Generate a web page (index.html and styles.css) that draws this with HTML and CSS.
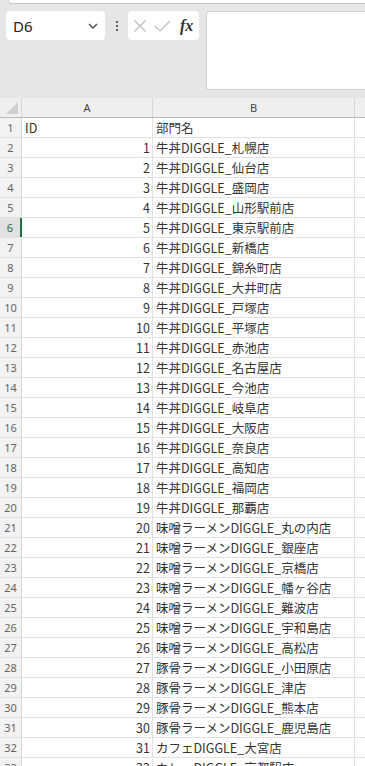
FILE: index.html
```html
<!DOCTYPE html>
<html lang="ja">
<head>
<meta charset="utf-8">
<title>Sheet</title>
<link rel="stylesheet" href="styles.css">
</head>
<body>
<div class="toolbar">
  <div class="topbox"></div>
  <div class="fbar">
    <div class="namebox">
      <span class="nb-text">D6</span>
      <svg class="chev" width="10" height="6" viewBox="0 0 10 6"><path d="M1 1 L5 5 L9 1" fill="none" stroke="#444" stroke-width="1.3"/></svg>
    </div>
    <div class="dots"><i></i><i></i><i></i></div>
    <div class="fbtns">
      <svg width="14" height="14" viewBox="0 0 14 14"><path d="M1.5 1.5 L12.5 12.5 M12.5 1.5 L1.5 12.5" stroke="#bdbdbd" stroke-width="1.2" fill="none"/></svg>
      <svg width="17" height="14" viewBox="0 0 17 14"><path d="M1 7 L6 12 L16 2" stroke="#bdbdbd" stroke-width="1.2" fill="none"/></svg>
      <span class="fx">fx</span>
    </div>
    <div class="finput"></div>
  </div>
</div>
<div class="sheet">
  <div class="row hdr">
    <div class="rh corner"><span class="tri"></span></div>
    <div class="ch">A</div>
    <div class="ch">B</div>
    <div class="ch rest"></div>
  </div>
  <div class="row"><div class="rh">1</div><div class="c">ID</div><div class="c">部門名</div><div class="c rest"></div></div>
  <div class="row"><div class="rh">2</div><div class="c n">1</div><div class="c">牛丼DIGGLE_札幌店</div><div class="c rest"></div></div>
  <div class="row"><div class="rh">3</div><div class="c n">2</div><div class="c">牛丼DIGGLE_仙台店</div><div class="c rest"></div></div>
  <div class="row"><div class="rh">4</div><div class="c n">3</div><div class="c">牛丼DIGGLE_盛岡店</div><div class="c rest"></div></div>
  <div class="row"><div class="rh">5</div><div class="c n">4</div><div class="c">牛丼DIGGLE_山形駅前店</div><div class="c rest"></div></div>
  <div class="row"><div class="rh sel">6</div><div class="c n">5</div><div class="c">牛丼DIGGLE_東京駅前店</div><div class="c rest"></div></div>
  <div class="row"><div class="rh">7</div><div class="c n">6</div><div class="c">牛丼DIGGLE_新橋店</div><div class="c rest"></div></div>
  <div class="row"><div class="rh">8</div><div class="c n">7</div><div class="c">牛丼DIGGLE_錦糸町店</div><div class="c rest"></div></div>
  <div class="row"><div class="rh">9</div><div class="c n">8</div><div class="c">牛丼DIGGLE_大井町店</div><div class="c rest"></div></div>
  <div class="row"><div class="rh">10</div><div class="c n">9</div><div class="c">牛丼DIGGLE_戸塚店</div><div class="c rest"></div></div>
  <div class="row"><div class="rh">11</div><div class="c n">10</div><div class="c">牛丼DIGGLE_平塚店</div><div class="c rest"></div></div>
  <div class="row"><div class="rh">12</div><div class="c n">11</div><div class="c">牛丼DIGGLE_赤池店</div><div class="c rest"></div></div>
  <div class="row"><div class="rh">13</div><div class="c n">12</div><div class="c">牛丼DIGGLE_名古屋店</div><div class="c rest"></div></div>
  <div class="row"><div class="rh">14</div><div class="c n">13</div><div class="c">牛丼DIGGLE_今池店</div><div class="c rest"></div></div>
  <div class="row"><div class="rh">15</div><div class="c n">14</div><div class="c">牛丼DIGGLE_岐阜店</div><div class="c rest"></div></div>
  <div class="row"><div class="rh">16</div><div class="c n">15</div><div class="c">牛丼DIGGLE_大阪店</div><div class="c rest"></div></div>
  <div class="row"><div class="rh">17</div><div class="c n">16</div><div class="c">牛丼DIGGLE_奈良店</div><div class="c rest"></div></div>
  <div class="row"><div class="rh">18</div><div class="c n">17</div><div class="c">牛丼DIGGLE_高知店</div><div class="c rest"></div></div>
  <div class="row"><div class="rh">19</div><div class="c n">18</div><div class="c">牛丼DIGGLE_福岡店</div><div class="c rest"></div></div>
  <div class="row"><div class="rh">20</div><div class="c n">19</div><div class="c">牛丼DIGGLE_那覇店</div><div class="c rest"></div></div>
  <div class="row"><div class="rh">21</div><div class="c n">20</div><div class="c">味噌ラーメンDIGGLE_丸の内店</div><div class="c rest"></div></div>
  <div class="row"><div class="rh">22</div><div class="c n">21</div><div class="c">味噌ラーメンDIGGLE_銀座店</div><div class="c rest"></div></div>
  <div class="row"><div class="rh">23</div><div class="c n">22</div><div class="c">味噌ラーメンDIGGLE_京橋店</div><div class="c rest"></div></div>
  <div class="row"><div class="rh">24</div><div class="c n">23</div><div class="c">味噌ラーメンDIGGLE_幡ヶ谷店</div><div class="c rest"></div></div>
  <div class="row"><div class="rh">25</div><div class="c n">24</div><div class="c">味噌ラーメンDIGGLE_難波店</div><div class="c rest"></div></div>
  <div class="row"><div class="rh">26</div><div class="c n">25</div><div class="c">味噌ラーメンDIGGLE_宇和島店</div><div class="c rest"></div></div>
  <div class="row"><div class="rh">27</div><div class="c n">26</div><div class="c">味噌ラーメンDIGGLE_高松店</div><div class="c rest"></div></div>
  <div class="row"><div class="rh">28</div><div class="c n">27</div><div class="c">豚骨ラーメンDIGGLE_小田原店</div><div class="c rest"></div></div>
  <div class="row"><div class="rh">29</div><div class="c n">28</div><div class="c">豚骨ラーメンDIGGLE_津店</div><div class="c rest"></div></div>
  <div class="row"><div class="rh">30</div><div class="c n">29</div><div class="c">豚骨ラーメンDIGGLE_熊本店</div><div class="c rest"></div></div>
  <div class="row"><div class="rh">31</div><div class="c n">30</div><div class="c">豚骨ラーメンDIGGLE_鹿児島店</div><div class="c rest"></div></div>
  <div class="row"><div class="rh">32</div><div class="c n">31</div><div class="c">カフェDIGGLE_大宮店</div><div class="c rest"></div></div>
  <div class="row"><div class="rh">33</div><div class="c n">32</div><div class="c">カレーDIGGLE_京都駅店</div><div class="c rest"></div></div>
</div>
</body>
</html>
```
FILE: styles.css
```css
* { box-sizing: border-box; }
html, body { margin: 0; padding: 0; }
body {
  width: 365px;
  height: 766px;
  overflow: hidden;
  background: #ffffff;
  font-family: "Noto Sans CJK JP", "Noto Sans", sans-serif;
  color: #222;
}
.toolbar {
  height: 98px;
  background: #e6e6e6;
}
.topbox {
  height: 4px;
  margin-left: 8px;
  background: #ffffff;
  border-bottom: 1px solid #c9c9c9;
  border-left: 1px solid #d4d4d4;
  border-bottom-left-radius: 4px;
}
.fbar {
  display: flex;
  align-items: flex-start;
  padding-left: 6px;
  margin-top: 7px;
}
.namebox {
  width: 99px;
  height: 29px;
  background: #fff;
  border-radius: 4px;
  display: flex;
  align-items: center;
  justify-content: space-between;
  padding: 0 7px 0 7px;
}
.nb-text {
  font-family: "Noto Sans", sans-serif;
  font-size: 15px;
  color: #222;
}
.chev { margin-top: 1px; }
.dots {
  width: 23px;
  height: 29px;
  display: flex;
  flex-direction: column;
  align-items: center;
  justify-content: center;
  gap: 2px;
}
.dots i {
  display: block;
  width: 2px;
  height: 2px;
  background: #333;
  border-radius: 1px;
}
.fbtns {
  width: 71px;
  height: 29px;
  background: #fff;
  border-radius: 4px;
  display: flex;
  align-items: center;
  gap: 7px;
  padding-left: 5px;
}
.fx {
  font-family: "Liberation Serif", serif;
  font-style: italic;
  font-weight: bold;
  font-size: 16px;
  color: #333;
  margin-left: 2px;
}
.finput {
  flex: 1;
  height: 79px;
  margin-left: 7px;
  background: #fff;
  border-radius: 4px 0 0 4px;
  border: 1px solid #d0d0d0;
  border-right: none;
}
.row {
  display: grid;
  grid-template-columns: 22px 131px 202px 1fr;
  height: 20px;
  border-bottom: 1px solid #e1e1e1;
}
.row.hdr {
  background: #efefef;
  border-bottom: 1px solid #b9b9b9;
}
.rh {
  background: #f2f2f2;
  border-right: 1px solid #d6d6d6;
  color: #666;
  font-size: 11px;
  line-height: 19px;
  text-align: center;
  font-family: "Noto Sans", sans-serif;
}
.rh.sel {
  background: #e1e1e1;
  border-right: 2px solid #1e6e42;
  color: #1e6e42;
}
.corner {
  position: relative;
  background: #efefef;
}
.tri {
  position: absolute;
  right: 3px;
  bottom: 3px;
  width: 0;
  height: 0;
  border-left: 12px solid transparent;
  border-bottom: 12px solid #cfcfcf;
}
.ch {
  border-right: 1px solid #d6d6d6;
  text-align: center;
  font-size: 11px;
  line-height: 19px;
  color: #444;
  font-family: "Noto Sans", sans-serif;
}
.c {
  border-right: 1px solid #e1e1e1;
  font-size: 12.5px;
  line-height: 19px;
  padding: 0 3px;
  white-space: nowrap;
  overflow: hidden;
  color: #333;
}
.c.n { text-align: right; padding-right: 2px; }
.rest { border-right: none; }
```
